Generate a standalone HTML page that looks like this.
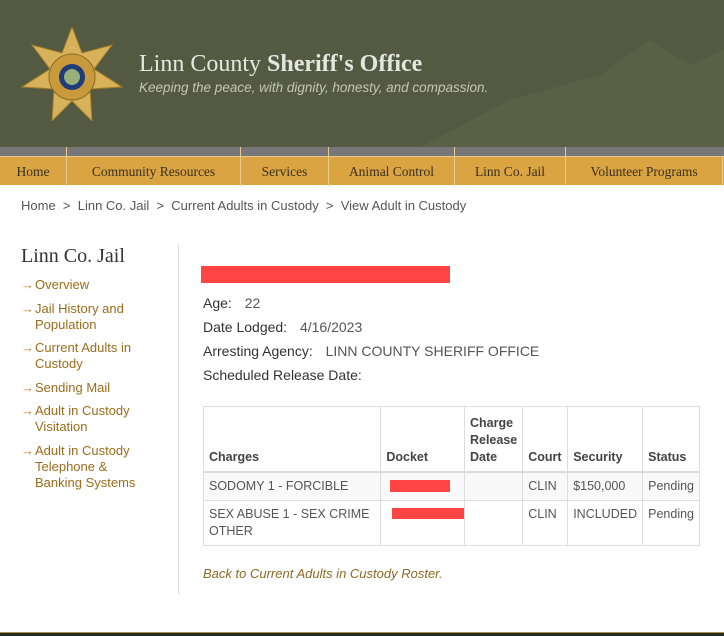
<!DOCTYPE html>
<html><head><meta charset="utf-8"><style>
*{margin:0;padding:0;box-sizing:border-box}
body{width:724px;height:636px;background:#fff;font-family:"Liberation Sans",sans-serif;color:#444;position:relative;overflow:hidden}
.hdr{position:absolute;left:0;top:0;width:724px;height:147px;background:#545a42;overflow:hidden}
.t1{position:absolute;left:139px;top:51px;font-family:"Liberation Serif",serif;font-size:24px;color:#e6e6e0}
.t2{position:absolute;left:139px;top:80px;font-size:13.5px;font-style:italic;color:#c8c6ae}
.gray{position:absolute;top:147px;left:0;width:724px;height:9px;background:#77777a}
.nav{position:absolute;top:156px;left:0;width:724px;height:29px;background:#d9a441;border-top:1px solid #e8c98a}
.nav div{position:absolute;top:0;height:29px;line-height:29px;font-family:"Liberation Serif",serif;font-size:13.5px;color:#3a3020;text-align:center;border-right:1px solid #e9c98e}
.sep{position:absolute;top:147px;width:1px;height:38px;background:#e9c98e}
.bc{position:absolute;top:198px;left:21px;font-size:13px;color:#555}
.side h2{position:absolute;left:21px;top:245px;font-family:"Liberation Serif",serif;font-weight:normal;font-size:20px;color:#333}
.side ul{position:absolute;left:21px;top:277px;width:130px;list-style:none;font-size:13px;color:#9a6d1c;line-height:16px}
.side li{padding-left:14px;position:relative;margin-bottom:7.5px}
.side li:before{content:"→";position:absolute;left:0;top:0;color:#b58a3c}
.vl{position:absolute;left:178px;top:244px;width:1px;height:350px;background:#ddd}
.red{position:absolute;background:#ff4444}
.info{position:absolute;left:203px;font-size:14px;color:#555}
.info b{font-weight:normal;color:#333;margin-right:9px}
table{position:absolute;left:203px;top:406px;width:497px;border-collapse:collapse;font-size:12.5px;color:#555}
td,th{border:1px solid #ddd;padding:5px 5px;vertical-align:top;text-align:left;line-height:17px}
th{vertical-align:bottom;font-weight:bold;color:#444;height:65px;border-bottom:2px solid #ddd}
tr.s td{background:#f9f9f9;height:28px}
.back{position:absolute;left:203px;top:566px;font-size:13px;font-style:italic;color:#8a6a24}
.foot{position:absolute;left:0;top:632px;width:724px;height:4px;background:#2a2a22;border-top:1px solid #a89050}
</style></head><body>
<div class="hdr">
<svg style="position:absolute;left:420px;top:20px" width="304" height="127"><path d="M0 127 L90 80 L180 55 L230 20 L270 45 L304 30 L304 127Z" fill="#5d6349" opacity=".7"/></svg>
<svg style="position:absolute;left:20px;top:27px" width="104" height="94" viewBox="0 0 104 94">
<polygon points="52,0 62,26 92,18 74,42 102,60 70,62 72,94 52,74 32,94 34,62 2,60 30,42 12,18 42,26" fill="#d8b25a" stroke="#a47e2a"/>
<circle cx="52" cy="50" r="23" fill="#c99a3c" stroke="#8a6a24"/>
<circle cx="52" cy="50" r="13" fill="#1e3b7a"/><circle cx="52" cy="50" r="8" fill="#9ab07a"/>
</svg>
<div class="t1">Linn County <b>Sheriff's Office</b></div>
<div class="t2">Keeping the peace, with dignity, honesty, and compassion.</div>
</div>
<div class="gray"></div>
<div class="nav">
<div style="left:0;width:67px">Home</div>
<div style="left:67px;width:174px">Community Resources</div>
<div style="left:241px;width:88px">Services</div>
<div style="left:329px;width:126px">Animal Control</div>
<div style="left:455px;width:111px">Linn Co. Jail</div>
<div style="left:566px;width:157px">Volunteer Programs</div>
</div>
<div class="sep" style="left:66px"></div><div class="sep" style="left:240px"></div><div class="sep" style="left:328px"></div><div class="sep" style="left:454px"></div><div class="sep" style="left:565px"></div>
<div class="bc">Home &nbsp;&gt;&nbsp; Linn Co. Jail &nbsp;&gt;&nbsp; Current Adults in Custody &nbsp;&gt;&nbsp; View Adult in Custody</div>
<div class="side"><h2>Linn Co. Jail</h2>
<ul><li>Overview</li><li>Jail History and Population</li><li>Current Adults in Custody</li><li>Sending Mail</li><li>Adult in Custody Visitation</li><li>Adult in Custody Telephone &amp; Banking Systems</li></ul></div>
<div class="vl"></div>
<div class="red" style="left:201px;top:266px;width:249px;height:17px"></div>
<div class="info" style="top:295px"><b>Age:</b> 22</div>
<div class="info" style="top:319px"><b>Date Lodged:</b> 4/16/2023</div>
<div class="info" style="top:343px"><b>Arresting Agency:</b> LINN COUNTY SHERIFF OFFICE</div>
<div class="info" style="top:367px"><b>Scheduled Release Date:</b></div>
<table>
<tr><th style="width:182px">Charges</th><th style="width:85px">Docket</th><th style="width:57px">Charge Release Date</th><th style="width:45px">Court</th><th style="width:70px">Security</th><th>Status</th></tr>
<tr class="s"><td>SODOMY 1 - FORCIBLE</td><td>&nbsp;</td><td></td><td>CLIN</td><td>$150,000</td><td>Pending</td></tr>
<tr><td>SEX ABUSE 1 - SEX CRIME OTHER</td><td>&nbsp;</td><td></td><td>CLIN</td><td>INCLUDED</td><td>Pending</td></tr>
</table>
<div class="red" style="left:390px;top:480px;width:60px;height:12px"></div>
<div class="red" style="left:392px;top:508px;width:72px;height:11px"></div>
<div class="back">Back to Current Adults in Custody Roster.</div>
<div class="foot"></div>
</body></html>
